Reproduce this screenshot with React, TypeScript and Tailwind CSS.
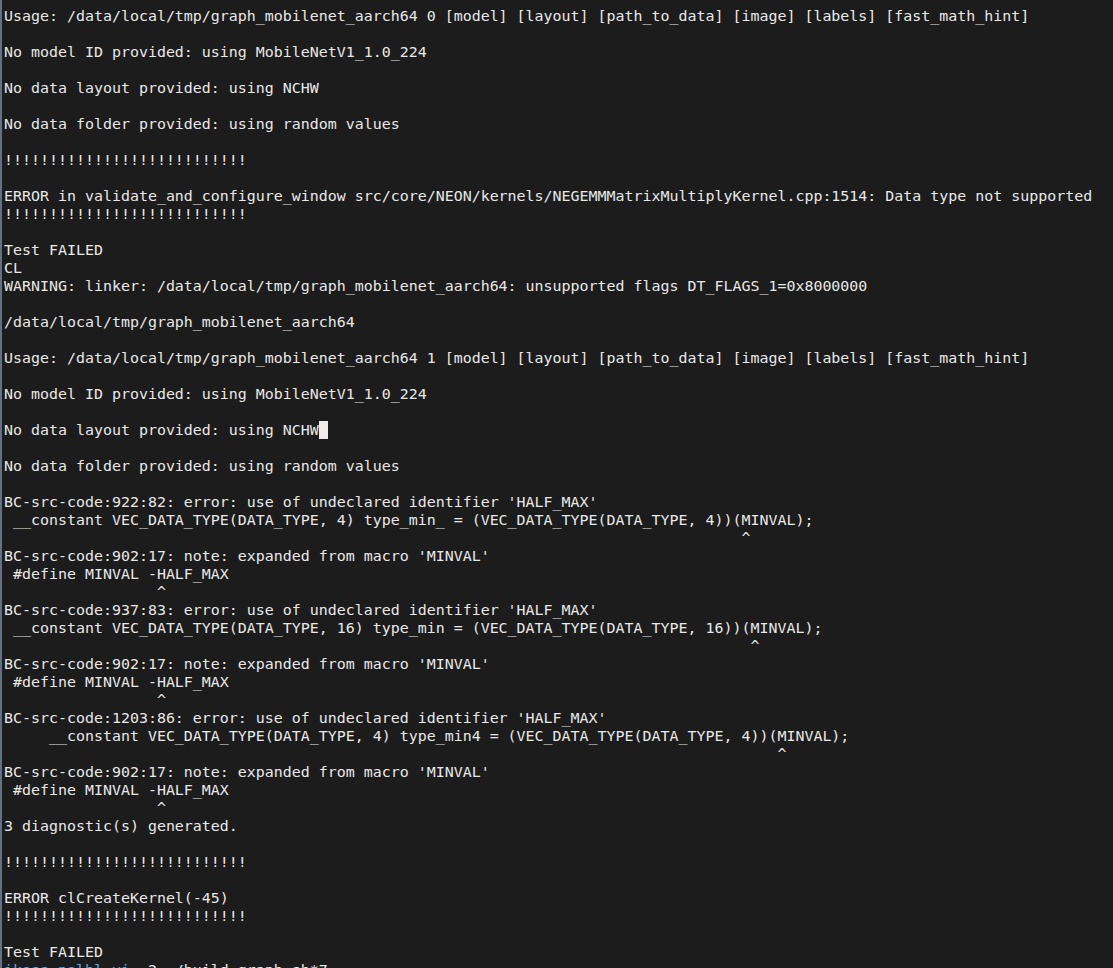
const bangs = "!!!!!!!!!!!!!!!!!!!!!!!!!!!";

const caret = (col: number) => " ".repeat(col) + "^";

const lines: string[] = [
  "Usage: /data/local/tmp/graph_mobilenet_aarch64 0 [model] [layout] [path_to_data] [image] [labels] [fast_math_hint]",
  "",
  "No model ID provided: using MobileNetV1_1.0_224",
  "",
  "No data layout provided: using NCHW",
  "",
  "No data folder provided: using random values",
  "",
  bangs,
  "",
  "ERROR in validate_and_configure_window src/core/NEON/kernels/NEGEMMMatrixMultiplyKernel.cpp:1514: Data type not supported",
  bangs,
  "",
  "Test FAILED",
  "CL",
  "WARNING: linker: /data/local/tmp/graph_mobilenet_aarch64: unsupported flags DT_FLAGS_1=0x8000000",
  "",
  "/data/local/tmp/graph_mobilenet_aarch64",
  "",
  "Usage: /data/local/tmp/graph_mobilenet_aarch64 1 [model] [layout] [path_to_data] [image] [labels] [fast_math_hint]",
  "",
  "No model ID provided: using MobileNetV1_1.0_224",
  "",
  "CURSOR",
  "",
  "No data folder provided: using random values",
  "",
  "BC-src-code:922:82: error: use of undeclared identifier 'HALF_MAX'",
  " __constant VEC_DATA_TYPE(DATA_TYPE, 4) type_min_ = (VEC_DATA_TYPE(DATA_TYPE, 4))(MINVAL);",
  caret(82),
  "BC-src-code:902:17: note: expanded from macro 'MINVAL'",
  " #define MINVAL -HALF_MAX",
  caret(17),
  "BC-src-code:937:83: error: use of undeclared identifier 'HALF_MAX'",
  " __constant VEC_DATA_TYPE(DATA_TYPE, 16) type_min = (VEC_DATA_TYPE(DATA_TYPE, 16))(MINVAL);",
  caret(83),
  "BC-src-code:902:17: note: expanded from macro 'MINVAL'",
  " #define MINVAL -HALF_MAX",
  caret(17),
  "BC-src-code:1203:86: error: use of undeclared identifier 'HALF_MAX'",
  "     __constant VEC_DATA_TYPE(DATA_TYPE, 4) type_min4 = (VEC_DATA_TYPE(DATA_TYPE, 4))(MINVAL);",
  caret(86),
  "BC-src-code:902:17: note: expanded from macro 'MINVAL'",
  " #define MINVAL -HALF_MAX",
  caret(17),
  "3 diagnostic(s) generated.",
  "",
  bangs,
  "",
  "ERROR clCreateKernel(-45)",
  bangs,
  "",
  "Test FAILED",
  "PROMPT",
];

function Line({ text }: { text: string }) {
  if (text === "CURSOR") {
    return (
      <div className="h-[18px] whitespace-pre">
        No data layout provided: using NCHW
        <span className="inline-block h-[18px] w-[9px] bg-[#f0ecec] align-top" />
      </div>
    );
  }
  if (text === "PROMPT") {
    return (
      <div className="h-[18px] whitespace-pre">
        <span className="text-[#5fa3e0]">ikoss-nolbl:vi</span>
        {"  2: /build_graph.sh*7"}
      </div>
    );
  }
  return <div className="h-[18px] whitespace-pre">{text}</div>;
}

export default function App() {
  return (
    <div className="h-[968px] w-[1113px] overflow-hidden bg-[#1c1c1c]">
      <div
        className="h-full border-l-2 border-[#66707e] pl-[2px] pt-[7px] text-[14.95px] leading-[18px] text-[#e8e8e8]"
        style={{ fontFamily: '"DejaVu Sans Mono", monospace' }}
      >
        {lines.map((l, i) => (
          <Line key={i} text={l} />
        ))}
      </div>
    </div>
  );
}
